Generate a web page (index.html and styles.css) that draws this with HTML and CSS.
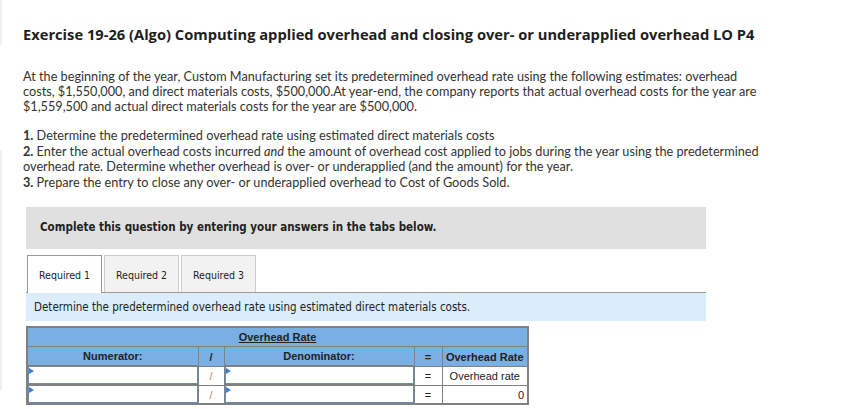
FILE: index.html
```html
<!DOCTYPE html>
<html lang="en">
<head>
  <meta charset="UTF-8">
  <meta name="viewport" content="width=device-width, initial-scale=1.0">
  <title>Exercise 19-26 (Algo)</title>
  <link rel="stylesheet" href="styles.css">
</head>
<body>
  <div class="page">
    <h1>Exercise 19-26 (Algo) Computing applied overhead and closing over- or underapplied overhead LO P4</h1>

    <p class="intro">At the beginning of the year, Custom Manufacturing set its predetermined overhead rate using the following estimates: overhead costs, $1,550,000, and direct materials costs, $500,000.At year-end, the company reports that actual overhead costs for the year are $1,559,500 and actual direct materials costs for the year are $500,000.</p>

    <p class="steps"><b>1.</b> Determine the predetermined overhead rate using estimated direct materials costs<br><b>2.</b> Enter the actual overhead costs incurred <i>and</i> the amount of overhead cost applied to jobs during the year using the predetermined overhead rate. Determine whether overhead is over- or underapplied (and the amount) for the year.<br><b>3.</b> Prepare the entry to close any over- or underapplied overhead to Cost of Goods Sold.</p>

    <div class="question">
      <div class="notice">Complete this question by entering your answers in the tabs below.</div>

      <!-- tabs -->
      <div class="tabs">
        <div class="tab active">Required 1</div>
        <div class="tab">Required 2</div>
        <div class="tab">Required 3</div>
      </div>
      <div class="tab-info">Determine the predetermined overhead rate using estimated direct materials costs.</div>

      <table class="rate-table">
        <colgroup>
          <col class="c-num">
          <col class="c-op">
          <col class="c-den">
          <col class="c-eq">
          <col class="c-res">
        </colgroup>
        <tr class="head">
          <th colspan="5"><u>Overhead Rate</u></th>
        </tr>
        <tr class="head">
          <th>Numerator:</th>
          <th>/</th>
          <th>Denominator:</th>
          <th>=</th>
          <th>Overhead Rate</th>
        </tr>
        <tr>
          <td class="entry"><div class="field"></div></td>
          <td class="op">/</td>
          <td class="entry"><div class="field"></div></td>
          <td class="eq">=</td>
          <td class="res">Overhead rate</td>
        </tr>
        <tr>
          <td class="entry"><div class="field"></div></td>
          <td class="op">/</td>
          <td class="entry"><div class="field"></div></td>
          <td class="eq">=</td>
          <td class="res right">0</td>
        </tr>
      </table>
    </div>
  </div>
</body>
</html>
```

FILE: styles.css
```css
body {
  margin: 0;
  background-color: #ffffff;
  color: #222222;
  font-family: Lato, "Open Sans", sans-serif;
}

.page {
  padding: 25px 0 0 25px;
  min-height: 384px;
  /* faint strip along the left edge, broken under the title */
  background-image: linear-gradient(#f0f0f0, #f0f0f0), linear-gradient(#f0f0f0, #f0f0f0);
  background-size: 2px 45px, 2px 240px;
  background-position: 0 0, 0 150px;
  background-repeat: no-repeat;
}

h1 {
  margin: 0 0 0 -2px;
  font-family: "Open Sans", Lato, sans-serif;
  font-size: 14.7px;
  line-height: 18px;
  font-weight: bold;
  color: #1e1e1e;
}

.intro, .steps {
  margin: 0 0 0 -2px;
  font-size: 12.7px;
  line-height: 15px;
  color: #333333;
  width: 746px;
}

.intro {
  margin-top: 26px;
}

.steps {
  margin-top: 14px;
  line-height: 15.6px;
}

.question {
  margin: 17px 0 0 1px;
  width: 680px;
  font-family: "DejaVu Sans Condensed", "DejaVu Sans", sans-serif;
  color: #222222;
}

.notice {
  background-color: #e0e0e0;
  height: 42px;
  line-height: 40px;
  padding-left: 14px;
  font-size: 11.5px;
  font-weight: bold;
}

.tabs {
  display: flex;
  gap: 2px;
  margin-top: 6px;
  padding-left: 1px;
}

.tab {
  width: 73px;
  height: 36px;
  line-height: 38px;
  text-align: center;
  font-size: 10.5px;
  background-color: #f2f2f2;
  border: 1px solid #cccccc;
  border-bottom: none;
}

.tab.active {
  background-color: #ffffff;
  border-color: #999999;
  height: 37px;
  margin-bottom: -1px;
}

.tab-info {
  border-top: 1px solid #999999;
  background-color: #dbedfb;
  height: 28px;
  line-height: 29px;
  padding-left: 8px;
  font-size: 11.5px;
}

.rate-table {
  margin-top: 5px;
  width: 501px;
  border-collapse: collapse;
  border: 2px solid #808080;
  table-layout: fixed;
  font-family: "Liberation Sans", Arial, sans-serif;
  font-size: 11px;
}

.c-num { width: 171px; }
.c-op { width: 26px; }
.c-den { width: 190px; }
.c-eq { width: 28px; }
.c-res { width: 86px; }

.rate-table th {
  background-color: #7aafe3;
  border: 1px solid #808080;
  height: 18px;
  padding: 0;
  font-weight: bold;
  color: #222222;
  white-space: nowrap;
}

.rate-table td {
  border: 1px solid #808080;
  height: 17px;
  padding: 0;
  text-align: center;
  white-space: nowrap;
  color: #222222;
}

.rate-table td.entry {
  position: relative;
  border-top: 2px solid #808080;
  vertical-align: top;
}

.field {
  height: 16px;
  border: 1px solid #6c8db4;
  border-top: none;
  background-color: #ffffff;
}

/* little blue marker in the corner of each answer box */
.entry::before {
  content: "";
  position: absolute;
  top: 1px;
  left: 1px;
  border-top: 3px solid transparent;
  border-bottom: 3px solid transparent;
  border-left: 5px solid #3a7fd0;
}

.rate-table td.op {
  color: #b58a5c;
}

.res.right {
  text-align: right;
  padding-right: 3px;
}
```
